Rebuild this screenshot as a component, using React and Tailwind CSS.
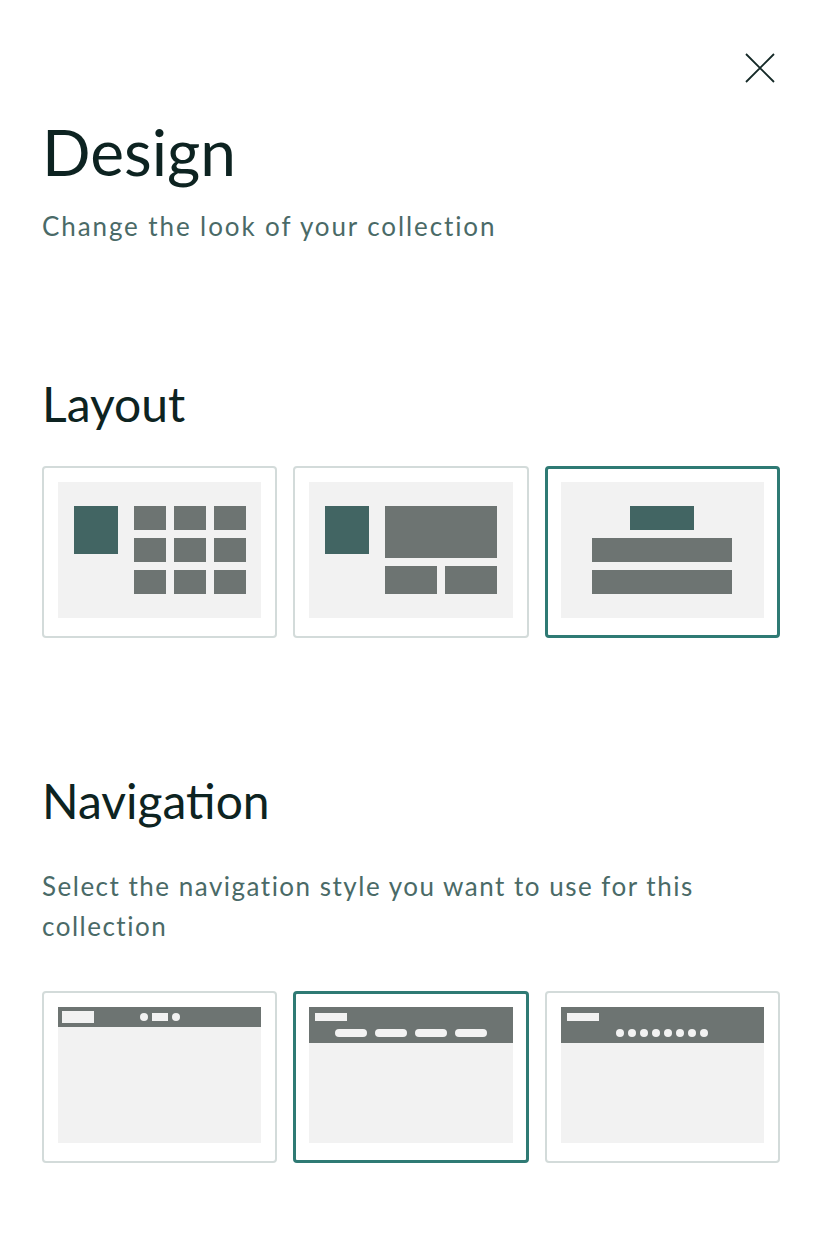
import { useState } from "react";

// Design settings panel: layout + navigation pickers
const font = { fontFamily: "Lato, 'Noto Sans', sans-serif" };

function OptionCard({ selected, onClick, children }) {
	return (
		<button
			type="button"
			onClick={onClick}
			className={
				"block h-[172px] rounded-[4px] bg-white text-left " +
				(selected
					? "border-[3px] border-[#2f7a74] px-[13px] pt-[13px] pb-[17px]"
					: "border-2 border-[#d3dbda] px-[14px] pt-[14px] pb-[18px]")
			}
		>
			<div className="h-[136px] w-full bg-[#f2f2f2]">{children}</div>
		</button>
	);
}

function LayoutGrid() {
	return (
		<div className="flex gap-4 pt-6 pl-4">
			<div className="h-12 w-11 bg-[#426563]" />
			<div className="grid grid-cols-[repeat(3,32px)] gap-2">
				{Array.from({ length: 9 }).map((_, i) => (
					<div key={i} className="h-6 w-8 bg-[#6d7472]" />
				))}
			</div>
		</div>
	);
}

function LayoutFeature() {
	return (
		<div className="flex gap-4 pt-6 pl-4">
			<div className="h-12 w-11 bg-[#426563]" />
			<div className="flex flex-col gap-2">
				<div className="h-[52px] w-28 bg-[#6d7472]" />
				<div className="flex gap-2">
					<div className="h-7 w-[52px] bg-[#6d7472]" />
					<div className="h-7 w-[52px] bg-[#6d7472]" />
				</div>
			</div>
		</div>
	);
}

function LayoutList() {
	return (
		<div className="flex flex-col items-center gap-2 pt-6">
			<div className="h-6 w-16 bg-[#426563]" />
			<div className="h-6 w-[140px] bg-[#6d7472]" />
			<div className="h-6 w-[140px] bg-[#6d7472]" />
		</div>
	);
}

function NavInline() {
	return (
		<div className="relative flex h-5 items-center justify-center bg-[#6d7472]">
			<div className="absolute top-1 left-1 h-3 w-8 bg-[#f2f2f2]" />
			<div className="flex items-center gap-1">
				<div className="h-2 w-2 rounded-full bg-[#f2f2f2]" />
				<div className="h-2 w-4 bg-[#f2f2f2]" />
				<div className="h-2 w-2 rounded-full bg-[#f2f2f2]" />
			</div>
		</div>
	);
}

function NavPills() {
	return (
		<div className="h-9 bg-[#6d7472] pt-1.5">
			<div className="ml-1.5 h-2 w-8 bg-[#f2f2f2]" />
			<div className="mt-2 flex justify-center gap-2">
				{[0, 1, 2, 3].map((i) => (
					<div key={i} className="h-2 w-8 rounded-full bg-[#f2f2f2]" />
				))}
			</div>
		</div>
	);
}

function NavDots() {
	return (
		<div className="h-9 bg-[#6d7472] pt-1.5">
			<div className="ml-1.5 h-2 w-8 bg-[#f2f2f2]" />
			<div className="mt-2 flex justify-center gap-1">
				{Array.from({ length: 8 }).map((_, i) => (
					<div key={i} className="h-2 w-2 rounded-full bg-[#f2f2f2]" />
				))}
			</div>
		</div>
	);
}

export default function App() {
	const [layout, setLayout] = useState(2);
	const [nav, setNav] = useState(1);

	const layouts = [LayoutGrid, LayoutFeature, LayoutList];
	const navs = [NavInline, NavPills, NavDots];

	return (
		<div className="min-h-[1252px] w-[824px] bg-white" style={font}>
			<div className="flex justify-end pt-[52px] pr-[48px]">
				<button type="button" aria-label="Close" className="h-8 w-8 text-[#142927]">
					<svg viewBox="0 0 32 32" className="h-8 w-8" fill="none" stroke="currentColor" strokeWidth="1.8">
						<path d="M2 2 L30 30 M30 2 L2 30" />
					</svg>
				</button>
			</div>

			<div className="px-[42px]">
				<h1 className="mt-[36px] text-[64px] leading-[64px] text-[#0d2321]">Design</h1>
				<p className="mt-[22px] text-[26px] leading-[40px] tracking-[1.9px] text-[#4a6a67]">
					Change the look of your collection
				</p>

				<h2 className="mt-[130px] text-[48px] leading-[56px] text-[#0d2321]">Layout</h2>
				<div className="mt-[34px] grid w-[738px] grid-cols-3 gap-4">
					{layouts.map((Comp, i) => (
						<OptionCard key={i} selected={layout === i} onClick={() => setLayout(i)}>
							<Comp />
						</OptionCard>
					))}
				</div>

				<h2 className="mt-[135px] text-[48px] leading-[56px] text-[#0d2321]">Navigation</h2>
				<p className="mt-[37px] w-[700px] text-[26px] leading-[40px] tracking-[1.5px] text-[#4a6a67]">
					Select the navigation style you want to use for this collection
				</p>
				<div className="mt-[45px] grid w-[738px] grid-cols-3 gap-4">
					{navs.map((Comp, i) => (
						<OptionCard key={i} selected={nav === i} onClick={() => setNav(i)}>
							<Comp />
						</OptionCard>
					))}
				</div>
			</div>
		</div>
	);
}
